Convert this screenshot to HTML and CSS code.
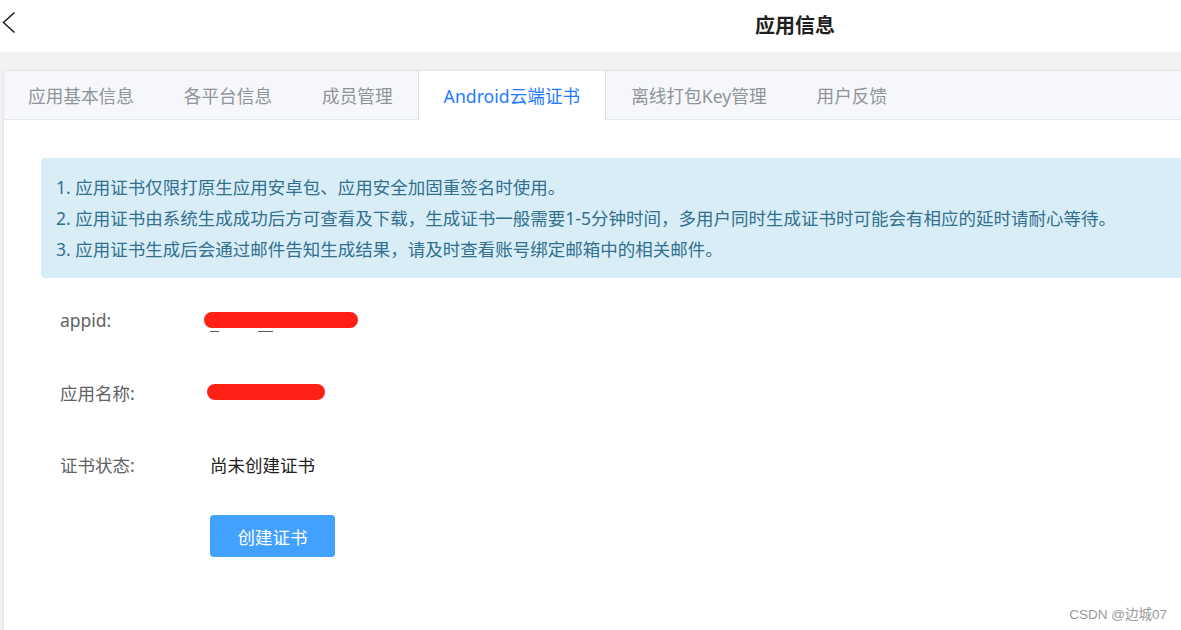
FILE: index.html
```html
<!DOCTYPE html>
<html lang="zh-CN">
<head>
<meta charset="utf-8">
<title>应用信息</title>
<link rel="stylesheet" href="styles.css">
</head>
<body>
<header class="topbar">
  <span class="back">
    <svg width="14" height="24" viewBox="0 0 14 24"><path d="M12.5 1.5 L1.5 11.5 L12.5 21.5" fill="none" stroke="#222" stroke-width="1.6"/></svg>
  </span>
  <h1 class="title">应用信息</h1>
</header>
<div class="page">
  <div class="card">
    <nav class="tabs">
      <div class="tab first">应用基本信息</div>
      <div class="tab">各平台信息</div>
      <div class="tab">成员管理</div>
      <div class="tab active">Android云端证书</div>
      <div class="tab">离线打包Key管理</div>
      <div class="tab">用户反馈</div>
    </nav>
    <div class="content">
      <div class="alert">
        <div>1. 应用证书仅限打原生应用安卓包、应用安全加固重签名时使用。</div>
        <div>2. 应用证书由系统生成成功后方可查看及下载，生成证书一般需要1-5分钟时间，多用户同时生成证书时可能会有相应的延时请耐心等待。</div>
        <div>3. 应用证书生成后会通过邮件告知生成结果，请及时查看账号绑定邮箱中的相关邮件。</div>
      </div>
      <div class="form">
        <div class="row">
          <div class="label">appid:</div>
          <div class="value redact-col">
            <span class="bar bar-appid"></span>
            <span class="marks"><i class="m1"></i><i class="m2"></i></span>
          </div>
        </div>
        <div class="row">
          <div class="label">应用名称:</div>
          <div class="value"><span class="bar bar-name"></span></div>
        </div>
        <div class="row">
          <div class="label">证书状态:</div>
          <div class="value text">尚未创建证书</div>
        </div>
        <div class="actions">
          <button class="btn">创建证书</button>
        </div>
      </div>
    </div>
  </div>
</div>
<div class="watermark">CSDN @边城07</div>
</body>
</html>
```

FILE: styles.css
```css
* { box-sizing: border-box; }
html, body { margin: 0; padding: 0; }
body {
  background: #f2f2f2;
  font-family: "Noto Sans", "Noto Sans CJK SC", sans-serif;
  width: 1181px;
  height: 630px;
  overflow: hidden;
  position: relative;
}
.topbar {
  height: 52px;
  background: #fff;
  display: flex;
  align-items: center;
}
.back {
  display: flex;
  width: 16px;
  margin-left: 2px;
  margin-top: -7px;
}
.title {
  margin: 0 0 0 737px;
  font-size: 20px;
  font-weight: 700;
  color: #1f1f1f;
  line-height: 1;
}
.page {
  padding: 19px 0 0 4px;
}
.card {
  background: #fff;
  box-shadow: 0 0 3px rgba(0,0,0,0.13);
  height: 559px;
}
.tabs {
  display: flex;
  height: 49px;
  background: #f5f7fa;
  border-bottom: 1px solid #e4e7ed;
}
.tab {
  padding: 0 25px;
  font-size: 17.65px;
  line-height: 50px;
  color: #909399;
  white-space: nowrap;
}
.tab.first { padding-left: 24px; }
.tab.active {
  background: #fff;
  color: #1e7bff;
  border-left: 1px solid #dcdfe6;
  border-right: 1px solid #dcdfe6;
  height: 49px;
  margin-bottom: -1px;
}
.content {
  padding: 38px 0 0 37px;
}
.alert {
  background: #d9edf6;
  color: #31708f;
  border-radius: 4px 0 0 4px;
  padding: 13.5px 15px;
  font-size: 17.5px;
  line-height: 31px;
  white-space: nowrap;
}
.form {
  margin-top: 6px;
  padding-left: 19px;
}
.row {
  display: grid;
  grid-template-columns: 150px 1fr;
  align-items: center;
  height: 72px;
}
.label {
  font-size: 17.5px;
  color: #606266;
}
.value.text {
  font-size: 17.5px;
  color: #222;
}
.redact-col {
  display: flex;
  flex-direction: column;
}
.bar {
  display: block;
  height: 16px;
  background: #ff2116;
  border-radius: 8px;
}
.bar-appid { width: 154px; margin-left: -6px; }
.bar-name { width: 118px; margin-left: -3px; }
.marks {
  display: flex;
  height: 1px;
  margin-top: 3px;
  margin-bottom: -4px;
}
.marks i { display: block; height: 1px; background: #555; }
.marks .m1 { width: 9px; }
.marks .m2 { width: 15px; margin-left: 39px; }
.actions {
  padding: 15px 0 0 150px;
}
.btn {
  width: 125px;
  height: 42px;
  border: 0;
  border-radius: 4px;
  background: #42a0ff;
  color: #fff;
  font-family: inherit;
  font-size: 17.5px;
  cursor: pointer;
}
.watermark {
  position: absolute;
  right: 14px;
  bottom: 7px;
  font-family: "Liberation Sans", "Noto Sans CJK SC", sans-serif;
  font-size: 13.5px;
  color: #9a9a9a;
}
```
